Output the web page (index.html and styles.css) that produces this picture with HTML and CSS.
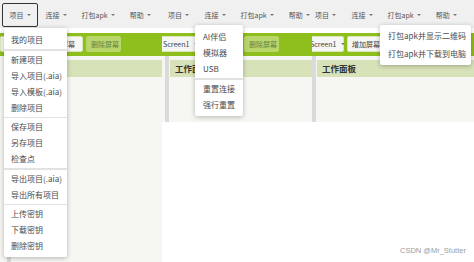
FILE: index.html
```html
<!DOCTYPE html>
<html lang="zh-CN">
    <head>
        <meta charset="utf-8">
        <title>App Inventor 菜单</title>
        <link rel="stylesheet" href="styles.css">
    </head>
    <body>
        <div class="shot">
            <div class="panel p1">
                <div class="view">
                    <div class="topbar">
                        <span class="menu first active">项目<i class="caret"></i></span>
                        <span class="menu">连接<i class="caret"></i></span>
                        <span class="menu">打包apk<i class="caret"></i></span>
                        <span class="menu">帮助<i class="caret"></i></span>
                    </div>
                    <div class="greenbar">
                        <span class="btn screen">Screen1<i class="caret"></i></span>
                        <span class="btn add">增加屏幕</span>
                        <span class="btn off">删除屏幕</span>
                    </div>
                    <div class="work full">
                        <div class="rail"></div>
                        <div class="workmain"><div class="band">工作面板</div></div>
                    </div>
                </div>
                <div class="dropdown d1">
                    <div class="item">我的项目</div>
                    <div class="sep"></div>
                    <div class="item">新建项目</div>
                    <div class="item">导入项目(.aia)</div>
                    <div class="item">导入模板(.aia)</div>
                    <div class="item">删除项目</div>
                    <div class="sep"></div>
                    <div class="item">保存项目</div>
                    <div class="item">另存项目</div>
                    <div class="item">检查点</div>
                    <div class="sep"></div>
                    <div class="item">导出项目(.aia)</div>
                    <div class="item">导出所有项目</div>
                    <div class="sep"></div>
                    <div class="item">上传密钥</div>
                    <div class="item">下载密钥</div>
                    <div class="item">删除密钥</div>
                </div>
            </div>

            <div class="panel p2">
                <div class="view">
                    <div class="topbar">
                        <span class="menu first">项目<i class="caret"></i></span>
                        <span class="menu">连接<i class="caret"></i></span>
                        <span class="menu">打包apk<i class="caret"></i></span>
                        <span class="menu">帮助<i class="caret"></i></span>
                    </div>
                    <div class="greenbar">
                        <span class="btn screen">Screen1<i class="caret"></i></span>
                        <span class="btn add">增加屏幕</span>
                        <span class="btn off">删除屏幕</span>
                    </div>
                    <div class="work">
                        <div class="rail"></div>
                        <div class="workmain"><div class="band">工作面板</div></div>
                    </div>
                </div>
                <div class="dropdown d2">
                    <div class="item">AI伴侣</div>
                    <div class="item">模拟器</div>
                    <div class="item">USB</div>
                    <div class="sep"></div>
                    <div class="item">重置连接</div>
                    <div class="item">强行重置</div>
                </div>
            </div>

            <div class="panel p3">
                <div class="view">
                    <div class="topbar">
                        <span class="menu first">项目<i class="caret"></i></span>
                        <span class="menu">连接<i class="caret"></i></span>
                        <span class="menu">打包apk<i class="caret"></i></span>
                        <span class="menu">帮助<i class="caret"></i></span>
                    </div>
                    <div class="greenbar">
                        <span class="btn screen">Screen1<i class="caret"></i></span>
                        <span class="btn add">增加屏幕</span>
                        <span class="btn off">删除屏幕</span>
                    </div>
                    <div class="work">
                        <div class="rail"></div>
                        <div class="workmain"><div class="band">工作面板</div></div>
                    </div>
                </div>
                <div class="dropdown d3">
                    <div class="item tall">打包apk并显示二维码</div>
                    <div class="item tall">打包apk并下载到电脑</div>
                </div>
            </div>

            <div class="mark">CSDN @Mr_Stutter</div>
        </div>
    </body>
</html>
```

FILE: styles.css
```css
body, html{
    margin: 0;
    background: #fff;
    font: 8px "Noto Sans CJK SC", "Noto Sans", sans-serif;
    color: #444;
}
.shot{
    position: relative;
    display: flex;
    width: 474px;
    height: 262px;
    overflow: hidden;
}
.panel{
    position: relative;
    height: 100%;
    overflow: hidden;
    background: #fff;
}
.p1{
    width: 162px;
}
.p2{
    width: 150px;
}
.p3{
    width: 162px;
}
.view{
    display: flex;
    flex-direction: column;
    height: 100%;
    width: 200px;
}
.p1 .view{
    margin-left: 4px;
}
.p3 .view{
    margin-left: -3px;
}

/* top menu */
.topbar{
    display: flex;
    height: 28px;
    background: #f0f0f0;
    margin-left: -6px;
    padding-left: 4px;
}
.menu{
    display: flex;
    align-items: center;
    height: 24px;
    margin-top: 3px;
    padding: 0 7.5px;
    font-size: 7px;
    color: #555;
    box-sizing: border-box;
    white-space: nowrap;
}
.menu.first{
    padding: 0 8px;
}
.menu.active{
    border: 1.5px solid #333;
    border-radius: 2px;
    padding: 0 6.5px;
}
.caret{
    display: inline-block;
    margin-left: 3px;
    border-left: 2px solid transparent;
    border-right: 2px solid transparent;
    border-top: 2.5px solid #777;
}

/* green toolbar */
.greenbar{
    display: flex;
    gap: 3px;
    height: 23px;
    margin-top: 5px;
    margin-left: -8px;
    padding: 3px 0 0 4px;
    box-sizing: border-box;
    background: #8fbf1c;
}
.btn{
    display: flex;
    align-items: center;
    height: 16px;
    padding: 0 4px;
    box-sizing: border-box;
    font-size: 7px;
    color: #444;
    background: #f6f6f4;
    border: 1px solid #d9e6b8;
    border-radius: 2px;
    white-space: nowrap;
}
.btn .caret{
    margin-left: 5px;
}
.btn.screen{
    width: 39px;
}
.btn.add{
    width: 41px;
}
.btn.off{
    width: 35px;
    background: #b8d66a;
    border-color: #b8d66a;
    color: #6c7f45;
}

/* workspace */
.work{
    display: flex;
    height: 66px;
    margin-left: -8px;
    background: #f6f6f2;
}
.work.full{
    flex-grow: 1;
    height: auto;
}
.rail{
    width: 4px;
    margin-left: 11px;
    background: #dadada;
}
.workmain{
    flex-grow: 1;
    padding-top: 4px;
    margin-left: 1px;
}
.band{
    height: 17px;
    line-height: 17px;
    padding-left: 5px;
    background: #d7e2b8;
    font-size: 8.5px;
    font-weight: bold;
    color: #333;
}

/* dropdown menus */
.dropdown{
    position: absolute;
    top: 28px;
    background: #fff;
    border-radius: 2px;
    box-shadow: 0 1px 5px rgba(0, 0, 0, 0.28);
    padding: 4px 0 1px;
}
.d1{
    left: 4px;
    width: 63px;
    height: 229px;
    box-sizing: border-box;
}
.d2{
    left: 33px;
    top: 25px;
    width: 48px;
    padding: 4px 0 3px;
}
.d3{
    left: 68px;
    top: 25px;
    width: 91px;
    padding: 2px 0;
}
.item{
    height: 16px;
    line-height: 16px;
    padding-left: 7px;
    font-size: 8px;
    color: #4a4a4a;
    white-space: nowrap;
}
.d2 .item, .d3 .item{
    padding-left: 8px;
}
.item.tall{
    height: 18px;
    line-height: 18px;
}
.sep{
    height: 1.5px;
    margin: 1px 0;
    background: #e2e2e2;
}

.mark{
    position: absolute;
    left: 400px;
    top: 246px;
    font: 7.5px "Liberation Sans", Arial, sans-serif;
    color: #9c9c9c;
}
```
